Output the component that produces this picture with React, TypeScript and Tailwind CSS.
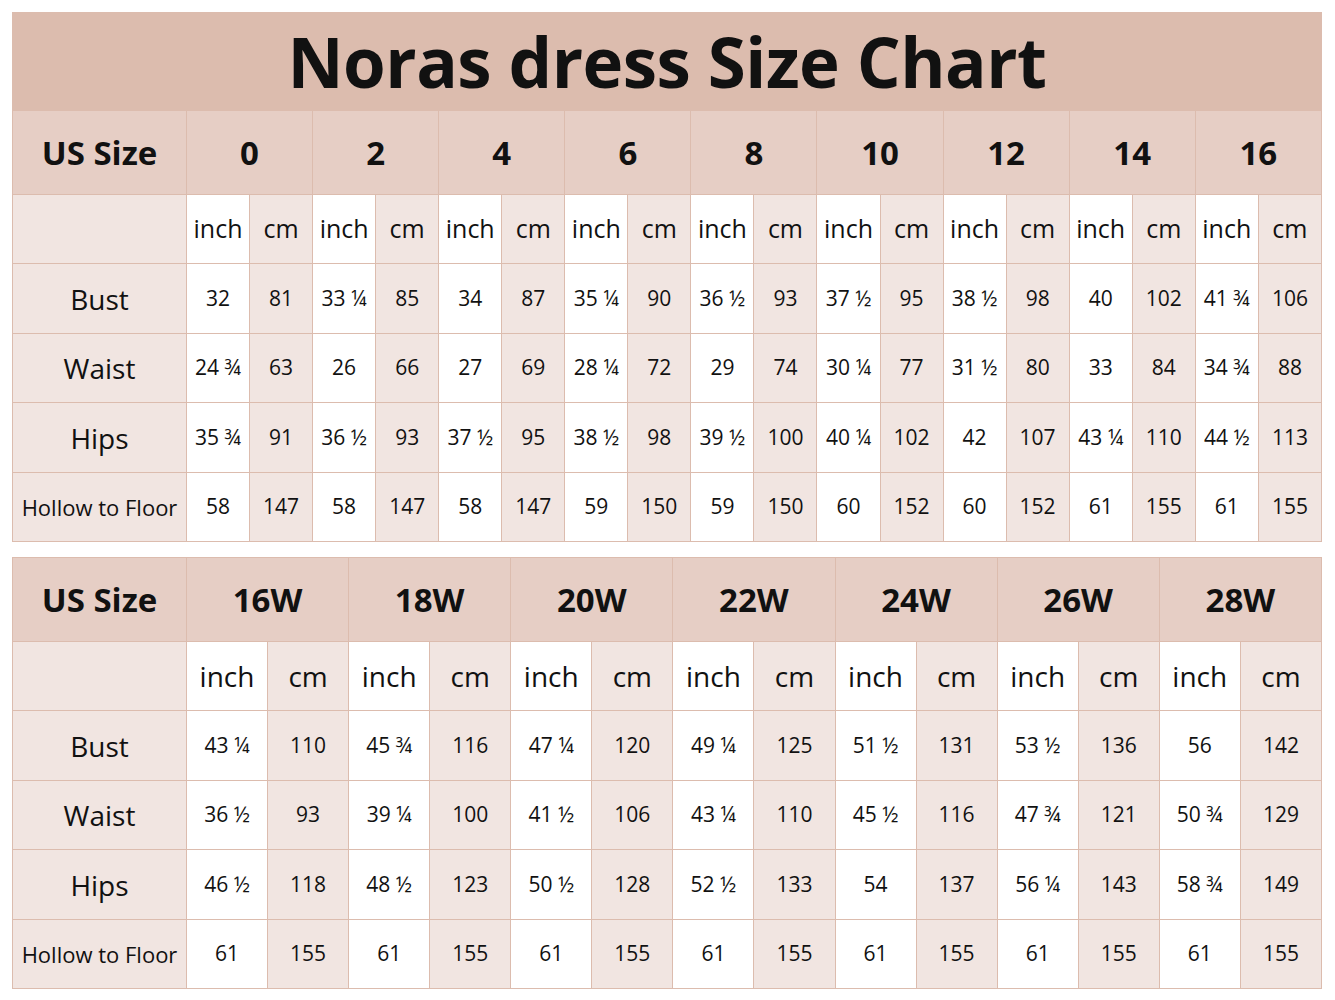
import React from "react";

type Row = { label: string; values: string[] };

const sizesA = ["0", "2", "4", "6", "8", "10", "12", "14", "16"];
const rowsA: Row[] = [
  {
    label: "Bust",
    values: ["32", "81", "33 ¼", "85", "34", "87", "35 ¼", "90", "36 ½", "93", "37 ½", "95", "38 ½", "98", "40", "102", "41 ¾", "106"],
  },
  {
    label: "Waist",
    values: ["24 ¾", "63", "26", "66", "27", "69", "28 ¼", "72", "29", "74", "30 ¼", "77", "31 ½", "80", "33", "84", "34 ¾", "88"],
  },
  {
    label: "Hips",
    values: ["35 ¾", "91", "36 ½", "93", "37 ½", "95", "38 ½", "98", "39 ½", "100", "40 ¼", "102", "42", "107", "43 ¼", "110", "44 ½", "113"],
  },
  {
    label: "Hollow to Floor",
    values: ["58", "147", "58", "147", "58", "147", "59", "150", "59", "150", "60", "152", "60", "152", "61", "155", "61", "155"],
  },
];

const sizesB = ["16W", "18W", "20W", "22W", "24W", "26W", "28W"];
const rowsB: Row[] = [
  {
    label: "Bust",
    values: ["43 ¼", "110", "45 ¾", "116", "47 ¼", "120", "49 ¼", "125", "51 ½", "131", "53 ½", "136", "56", "142"],
  },
  {
    label: "Waist",
    values: ["36 ½", "93", "39 ¼", "100", "41 ½", "106", "43 ¼", "110", "45 ½", "116", "47 ¾", "121", "50 ¾", "129"],
  },
  {
    label: "Hips",
    values: ["46 ½", "118", "48 ½", "123", "50 ½", "128", "52 ½", "133", "54", "137", "56 ¼", "143", "58 ¾", "149"],
  },
  {
    label: "Hollow to Floor",
    values: ["61", "155", "61", "155", "61", "155", "61", "155", "61", "155", "61", "155", "61", "155"],
  },
];

const cell = "border border-[#dcbcae] text-center align-middle p-0";

interface SizeTableProps {
  sizes: string[];
  rows: Row[];
  title?: string;
  unitText: string;
}

const SizeTable = ({ sizes, rows, title, unitText }: SizeTableProps) => {
  const heights = ["h-[70px]", "h-[69px]", "h-[70px]", "h-[69px]"];
  return (
    <table className="w-[1310px] table-fixed border-collapse text-[#111]">
      <colgroup>
        <col className="w-[174px]" />
        {sizes.map((s) => (
          <React.Fragment key={s}>
            <col />
            <col />
          </React.Fragment>
        ))}
      </colgroup>
      <tbody>
        {title && (
          <tr className="h-[98px] bg-[#dcbcae]">
            <td colSpan={sizes.length * 2 + 1} className={cell}>
              <span className="text-[69px] font-bold leading-none tracking-[-0.5px]">
                {title}
              </span>
            </td>
          </tr>
        )}
        <tr className="h-[84px] bg-[#e6cec5]">
          <td className={`${cell} text-[33px] font-bold`}>US Size</td>
          {sizes.map((s) => (
            <td key={s} colSpan={2} className={`${cell} text-[33px] font-bold`}>
              {s}
            </td>
          ))}
        </tr>
        <tr className="h-[69px]">
          <td className={`${cell} bg-[#f1e5e1]`}></td>
          {sizes.map((s) => (
            <React.Fragment key={s}>
              <td className={`${cell} bg-white ${unitText}`}>inch</td>
              <td className={`${cell} bg-[#f1e5e1] ${unitText}`}>cm</td>
            </React.Fragment>
          ))}
        </tr>
        {rows.map((row, ri) => (
          <tr key={row.label} className={heights[ri]}>
            <td
              className={`${cell} bg-[#f1e5e1] ${
                row.label === "Hollow to Floor" ? "text-[22px]" : "text-[28px]"
              }`}
            >
              {row.label}
            </td>
            {row.values.map((v, i) => (
              <td
                key={i}
                className={`${cell} text-[21px] whitespace-nowrap ${
                  i % 2 === 0 ? "bg-white" : "bg-[#f1e5e1]"
                }`}
              >
                {v}
              </td>
            ))}
          </tr>
        ))}
      </tbody>
    </table>
  );
};

export default function App() {
  return (
    <div
      className="w-[1335px] h-[1000px] bg-white pt-[12px] pl-[12px]"
      style={{ fontFamily: '"Open Sans", "Noto Sans", sans-serif' }}
    >
      <div className="flex flex-col gap-[15px]">
        <SizeTable
          sizes={sizesA}
          rows={rowsA}
          title="Noras dress Size Chart"
          unitText="text-[25px]"
        />
        <SizeTable sizes={sizesB} rows={rowsB} unitText="text-[28px]" />
      </div>
    </div>
  );
}
